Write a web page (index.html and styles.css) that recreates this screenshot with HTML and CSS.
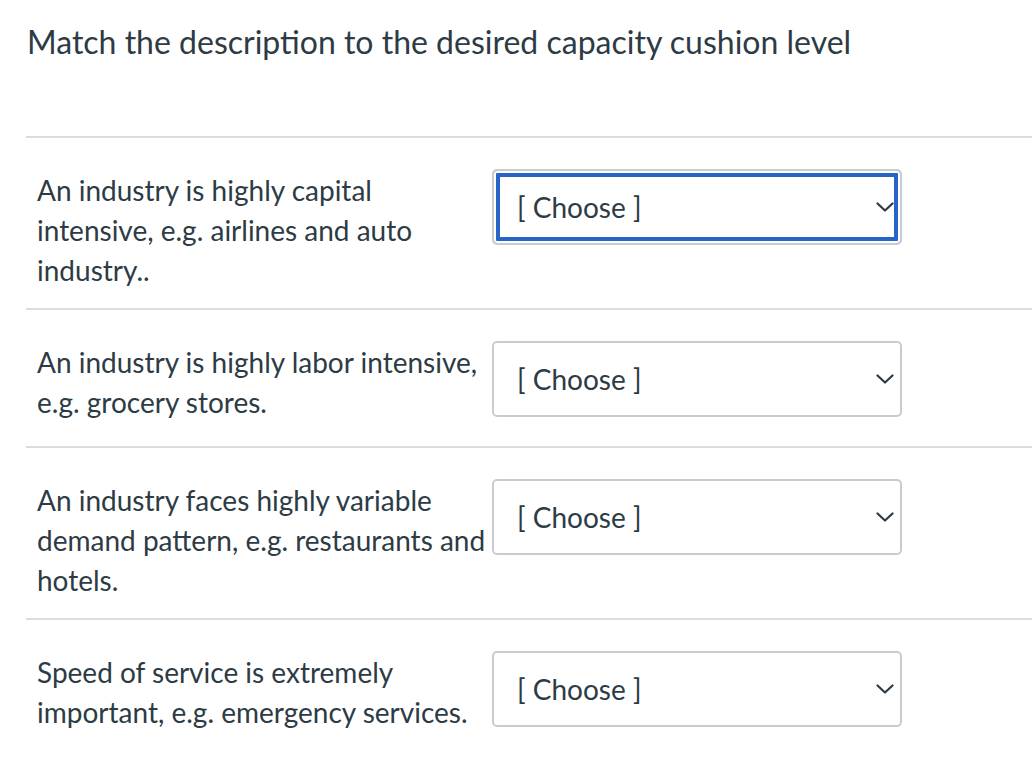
FILE: index.html
```html
<!DOCTYPE html>
<html lang="en">
<head>
<meta charset="utf-8">
<title>Match the description</title>
<link rel="stylesheet" href="styles.css">
</head>
<body>
<div class="page">
  <h1 class="title">Match the description to the desired capacity cushion level</h1>
  <div class="rows">
    <div class="row">
      <div class="desc">An industry is highly capital intensive, e.g. airlines and auto industry..</div>
      <div class="select focused">
        <select><option>[ Choose ]</option></select>
        <svg class="chev" viewBox="0 0 18 10" width="18" height="10"><path d="M1.5 1.5 L9 8.5 L16.5 1.5" fill="none" stroke="#2d3b45" stroke-width="2.2" stroke-linecap="round" stroke-linejoin="round"/></svg>
      </div>
    </div>
    <div class="row">
      <div class="desc">An industry is highly labor intensive, e.g. grocery stores.</div>
      <div class="select">
        <select><option>[ Choose ]</option></select>
        <svg class="chev" viewBox="0 0 18 10" width="18" height="10"><path d="M1.5 1.5 L9 8.5 L16.5 1.5" fill="none" stroke="#2d3b45" stroke-width="2.2" stroke-linecap="round" stroke-linejoin="round"/></svg>
      </div>
    </div>
    <div class="row">
      <div class="desc">An industry faces highly variable demand pattern, e.g. restaurants and hotels.</div>
      <div class="select">
        <select><option>[ Choose ]</option></select>
        <svg class="chev" viewBox="0 0 18 10" width="18" height="10"><path d="M1.5 1.5 L9 8.5 L16.5 1.5" fill="none" stroke="#2d3b45" stroke-width="2.2" stroke-linecap="round" stroke-linejoin="round"/></svg>
      </div>
    </div>
    <div class="row">
      <div class="desc">Speed of service is extremely important, e.g. emergency services.</div>
      <div class="select">
        <select><option>[ Choose ]</option></select>
        <svg class="chev" viewBox="0 0 18 10" width="18" height="10"><path d="M1.5 1.5 L9 8.5 L16.5 1.5" fill="none" stroke="#2d3b45" stroke-width="2.2" stroke-linecap="round" stroke-linejoin="round"/></svg>
      </div>
    </div>
  </div>
</div>
</body>
</html>
```
FILE: styles.css
```css
html, body {
  margin: 0;
  padding: 0;
  background: #ffffff;
}
body {
  font-family: Lato, "Noto Sans", sans-serif;
  color: #2d3b45;
  width: 1032px;
  height: 778px;
  overflow: hidden;
}
.page {
  padding-left: 26px;
}
.title {
  margin: 0;
  padding: 23px 0 0 1px;
  height: 136px;
  box-sizing: border-box;
  font-size: 32px;
  font-weight: 400;
  line-height: 38px;
  color: #2d3b45;
}
.row {
  display: flex;
  align-items: flex-start;
  border-top: 2px solid #dcdcdc;
  padding: 31px 0 18px 11px;
}
.desc {
  width: 455px;
  flex: none;
  font-size: 28px;
  line-height: 40px;
  margin-top: 1px;
}
.select {
  position: relative;
  width: 410px;
  height: 76px;
  flex: none;
  margin-bottom: 11px;
}
.select select {
  appearance: none;
  -webkit-appearance: none;
  width: 100%;
  height: 100%;
  box-sizing: border-box;
  border: 2px solid #c9ccce;
  border-radius: 5px;
  background: #ffffff;
  font-family: Lato, "Noto Sans", sans-serif;
  font-size: 28px;
  color: #2d3b45;
  padding: 0 0 0 23px;
  margin: 0;
  outline: none;
}
.select.focused select {
  box-shadow: inset 0 0 0 2px #ffffff, inset 0 0 0 6px #2764c8;
}
.chev {
  position: absolute;
  right: 8px;
  top: 33px;
  pointer-events: none;
}
```
